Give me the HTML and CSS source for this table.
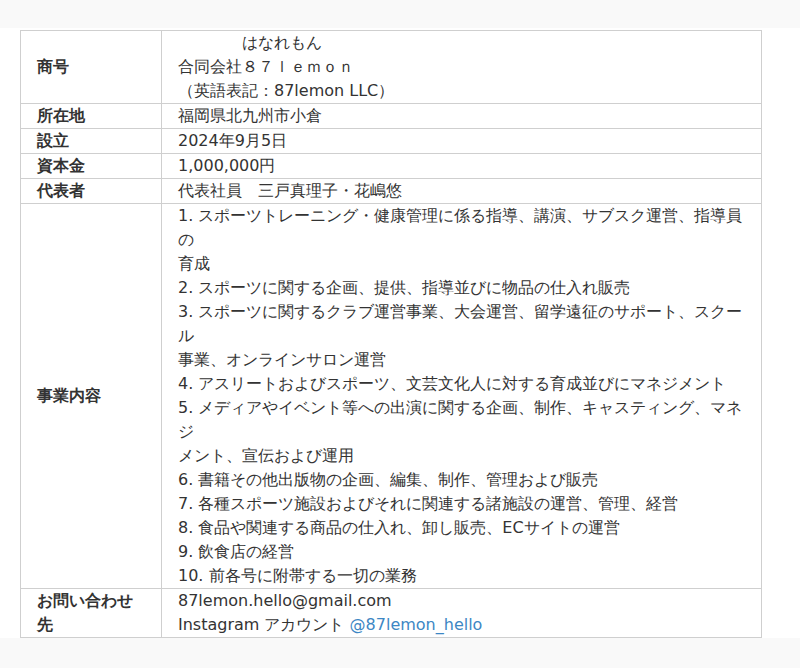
FILE: index.html
```html
<!DOCTYPE html>
<html lang="ja">
<head>
<meta charset="utf-8">
<title>会社概要</title>
<link rel="stylesheet" href="styles.css">
</head>
<body>
<div class="top-strip"></div>
<section class="company">
  <table class="info">
    <colgroup>
      <col class="col-head">
      <col class="col-data">
    </colgroup>
    <tbody>
      <tr>
        <th>商号</th>
        <td>　　　　はなれもん<br>合同会社８７ｌｅｍｏｎ<br>（英語表記：87lemon LLC）</td>
      </tr>
      <tr>
        <th>所在地</th>
        <td>福岡県北九州市小倉</td>
      </tr>
      <tr>
        <th>設立</th>
        <td>2024年9月5日</td>
      </tr>
      <tr>
        <th>資本金</th>
        <td>1,000,000円</td>
      </tr>
      <tr>
        <th>代表者</th>
        <td>代表社員　三戸真理子・花嶋悠</td>
      </tr>
      <tr>
        <th>事業内容</th>
        <td>1. スポーツトレーニング・健康管理に係る指導、講演、サブスク運営、指導員の<br>育成<br>2. スポーツに関する企画、提供、指導並びに物品の仕入れ販売<br>3. スポーツに関するクラブ運営事業、大会運営、留学遠征のサポート、スクール<br>事業、オンラインサロン運営<br>4. アスリートおよびスポーツ、文芸文化人に対する育成並びにマネジメント<br>5. メディアやイベント等への出演に関する企画、制作、キャスティング、マネジ<br>メント、宣伝および運用<br>6. 書籍その他出版物の企画、編集、制作、管理および販売<br>7. 各種スポーツ施設およびそれに関連する諸施設の運営、管理、経営<br>8. 食品や関連する商品の仕入れ、卸し販売、ECサイトの運営<br>9. 飲食店の経営<br>10. 前各号に附帯する一切の業務</td>
      </tr>
      <tr>
        <th>お問い合わせ先</th>
        <td>87lemon.hello@gmail.com<br>Instagram アカウント <a class="link" href="#">@87lemon_hello</a></td>
      </tr>
    </tbody>
  </table>
</section>
</body>
</html>
```
FILE: styles.css
```css
html, body {
  margin: 0;
  padding: 0;
}
body {
  background: #f9f9f9;
  font-family: "DejaVu Sans", sans-serif;
  font-size: 16px;
  line-height: 24px;
  color: #333;
}
.top-strip {
  height: 28px;
}
.company {
  background: #fff;
  padding: 2px 0 0 20px;
}
.info {
  width: 742px;
  border-collapse: collapse;
  table-layout: fixed;
}
.col-head {
  width: 141px;
}
.info th,
.info td {
  border: 1px solid #cfcfcf;
  padding: 0 16px;
  vertical-align: middle;
  text-align: left;
}
.info th {
  font-weight: bold;
}
.link {
  color: #3d87c4;
  text-decoration: none;
}
```
